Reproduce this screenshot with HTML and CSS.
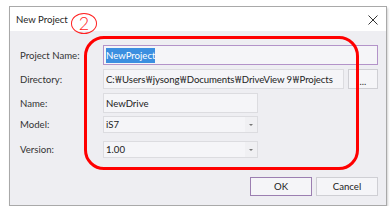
FILE: index.html
```html
<!DOCTYPE html>
<html>
<head>
<meta charset="utf-8">
<link rel="stylesheet" href="styles.css">
</head>
<body>
<div class="window">
  <div class="titlebar">
    <span class="title">New Project</span>
    <span class="close">
      <svg width="10" height="10" viewBox="0 0 10 10"><path d="M0.5 0.5 L9.5 9.5 M9.5 0.5 L0.5 9.5" stroke="#333" stroke-width="1" fill="none"/></svg>
    </span>
  </div>
  <div class="content">
    <div class="row r1">
      <div class="label">Project Name:</div>
      <div class="field wide focus"><span class="sel">NewProject</span></div>
    </div>
    <div class="row r2">
      <div class="label">Directory:</div>
      <div class="dir">
        <div class="field dirfield">C:<span class="won">₩</span>Users<span class="won">₩</span>jysong<span class="won">₩</span>Documents<span class="won">₩</span>DriveView 9<span class="won">₩</span>Projects</div>
        <div class="browse">...</div>
      </div>
    </div>
    <div class="row r3">
      <div class="label">Name:</div>
      <div class="field short">NewDrive</div>
    </div>
    <div class="row r4">
      <div class="label">Model:</div>
      <div class="field short combo"><span>iS7</span><span class="arrow"></span></div>
    </div>
    <div class="row r5">
      <div class="label">Version:</div>
      <div class="field short combo"><span>1.00</span><span class="arrow"></span></div>
    </div>
    <div class="buttons">
      <div class="btn ok">OK</div>
      <div class="btn">Cancel</div>
    </div>
  </div>
  <div class="annot-circle">2</div>
  <div class="annot-rect"></div>
</div>
</body>
</html>
```
FILE: styles.css
```css
html, body {
  margin: 0;
  padding: 0;
  background: #ffffff;
  font-family: "Lato", "Noto Sans", sans-serif;
  font-size: 9.6px;
  color: #1e1e1e;
}
.window {
  position: relative;
  margin: 6px 0 0 9px;
  width: 376px;
  height: 198px;
  border: 1px solid #a9a9a9;
  background: #eeeef2;
  box-shadow: 1px 2px 2px rgba(0,0,0,0.18);
}
.titlebar {
  height: 24px;
  background: #ffffff;
  display: flex;
  align-items: center;
  justify-content: space-between;
  padding: 1px 8px 0 6px;
  box-sizing: border-box;
}
.title {
  font-size: 9.6px;
  color: #1e1e1e;
}
.close {
  display: flex;
  width: 10px;
  height: 10px;
}
.content {
  padding: 14px 8px 0 10px;
  display: flex;
  flex-direction: column;
}
.row {
  display: grid;
  grid-template-columns: 83px 1fr;
  align-items: center;
}
.r1 { height: 20px; }
.r2 { height: 20px; margin-top: 4px; }
.r3 { height: 20px; margin-top: 4px; }
.r4 { height: 17px; margin-top: 3px; }
.r5 { height: 17px; margin-top: 8px; }
.label {
  color: #333;
}
.field {
  box-sizing: border-box;
  height: 100%;
  border: 1px solid #dcdce0;
  background: #f5f5f8;
  display: flex;
  align-items: center;
  padding-left: 2px;
  color: #222;
  white-space: nowrap;
  overflow: hidden;
}
.focus {
  border-color: #b393c9;
}
.sel {
  background: #3b8fe0;
  color: #fff;
  line-height: 15px;
}
.short { width: 155px; }
.dir {
  display: flex;
  height: 20px;
  gap: 4px;
}
.dirfield {
  width: 241px;
  height: 20px;
  letter-spacing: -0.1px;
}
.won {
  display: inline-block;
  width: 7.5px;
  text-align: center;
  font-family: "Noto Sans", sans-serif;
  font-size: 9.4px;
  color: #333;
}
.browse {
  box-sizing: border-box;
  width: 30px;
  height: 20px;
  border: 1px solid #cfcfd4;
  background: #f5f5f8;
  display: flex;
  justify-content: center;
  align-items: flex-end;
  line-height: 12px;
  color: #333;
}
.combo {
  justify-content: space-between;
  padding-right: 0;
}
.arrow {
  width: 12px;
  height: 100%;
  background: #f0f0f3;
  position: relative;
}
.arrow::after {
  content: "";
  position: absolute;
  left: 4px;
  top: 7px;
  border-left: 2px solid transparent;
  border-right: 2px solid transparent;
  border-top: 2px solid #777;
}
.buttons {
  display: flex;
  justify-content: flex-end;
  gap: 4px;
  margin-top: 19px;
}
.btn {
  box-sizing: border-box;
  width: 62px;
  height: 19px;
  border: 1px solid #cfcfd4;
  background: #f5f5f8;
  display: flex;
  align-items: center;
  justify-content: center;
  color: #222;
}
.btn.ok {
  border-color: #9c7fb1;
}
.annot-circle {
  position: absolute;
  left: 61px;
  top: 6px;
  box-sizing: border-box;
  width: 26px;
  height: 21px;
  border: 1px solid #ff2020;
  border-radius: 50%;
  color: #ff1a1a;
  font-family: "Lato", sans-serif;
  font-weight: 300;
  font-size: 18px;
  line-height: 19px;
  text-align: center;
}
.annot-rect {
  position: absolute;
  left: 74px;
  top: 29px;
  width: 275px;
  height: 134px;
  border: 3px solid #ff0000;
  border-radius: 20px;
  box-sizing: border-box;
}
```
